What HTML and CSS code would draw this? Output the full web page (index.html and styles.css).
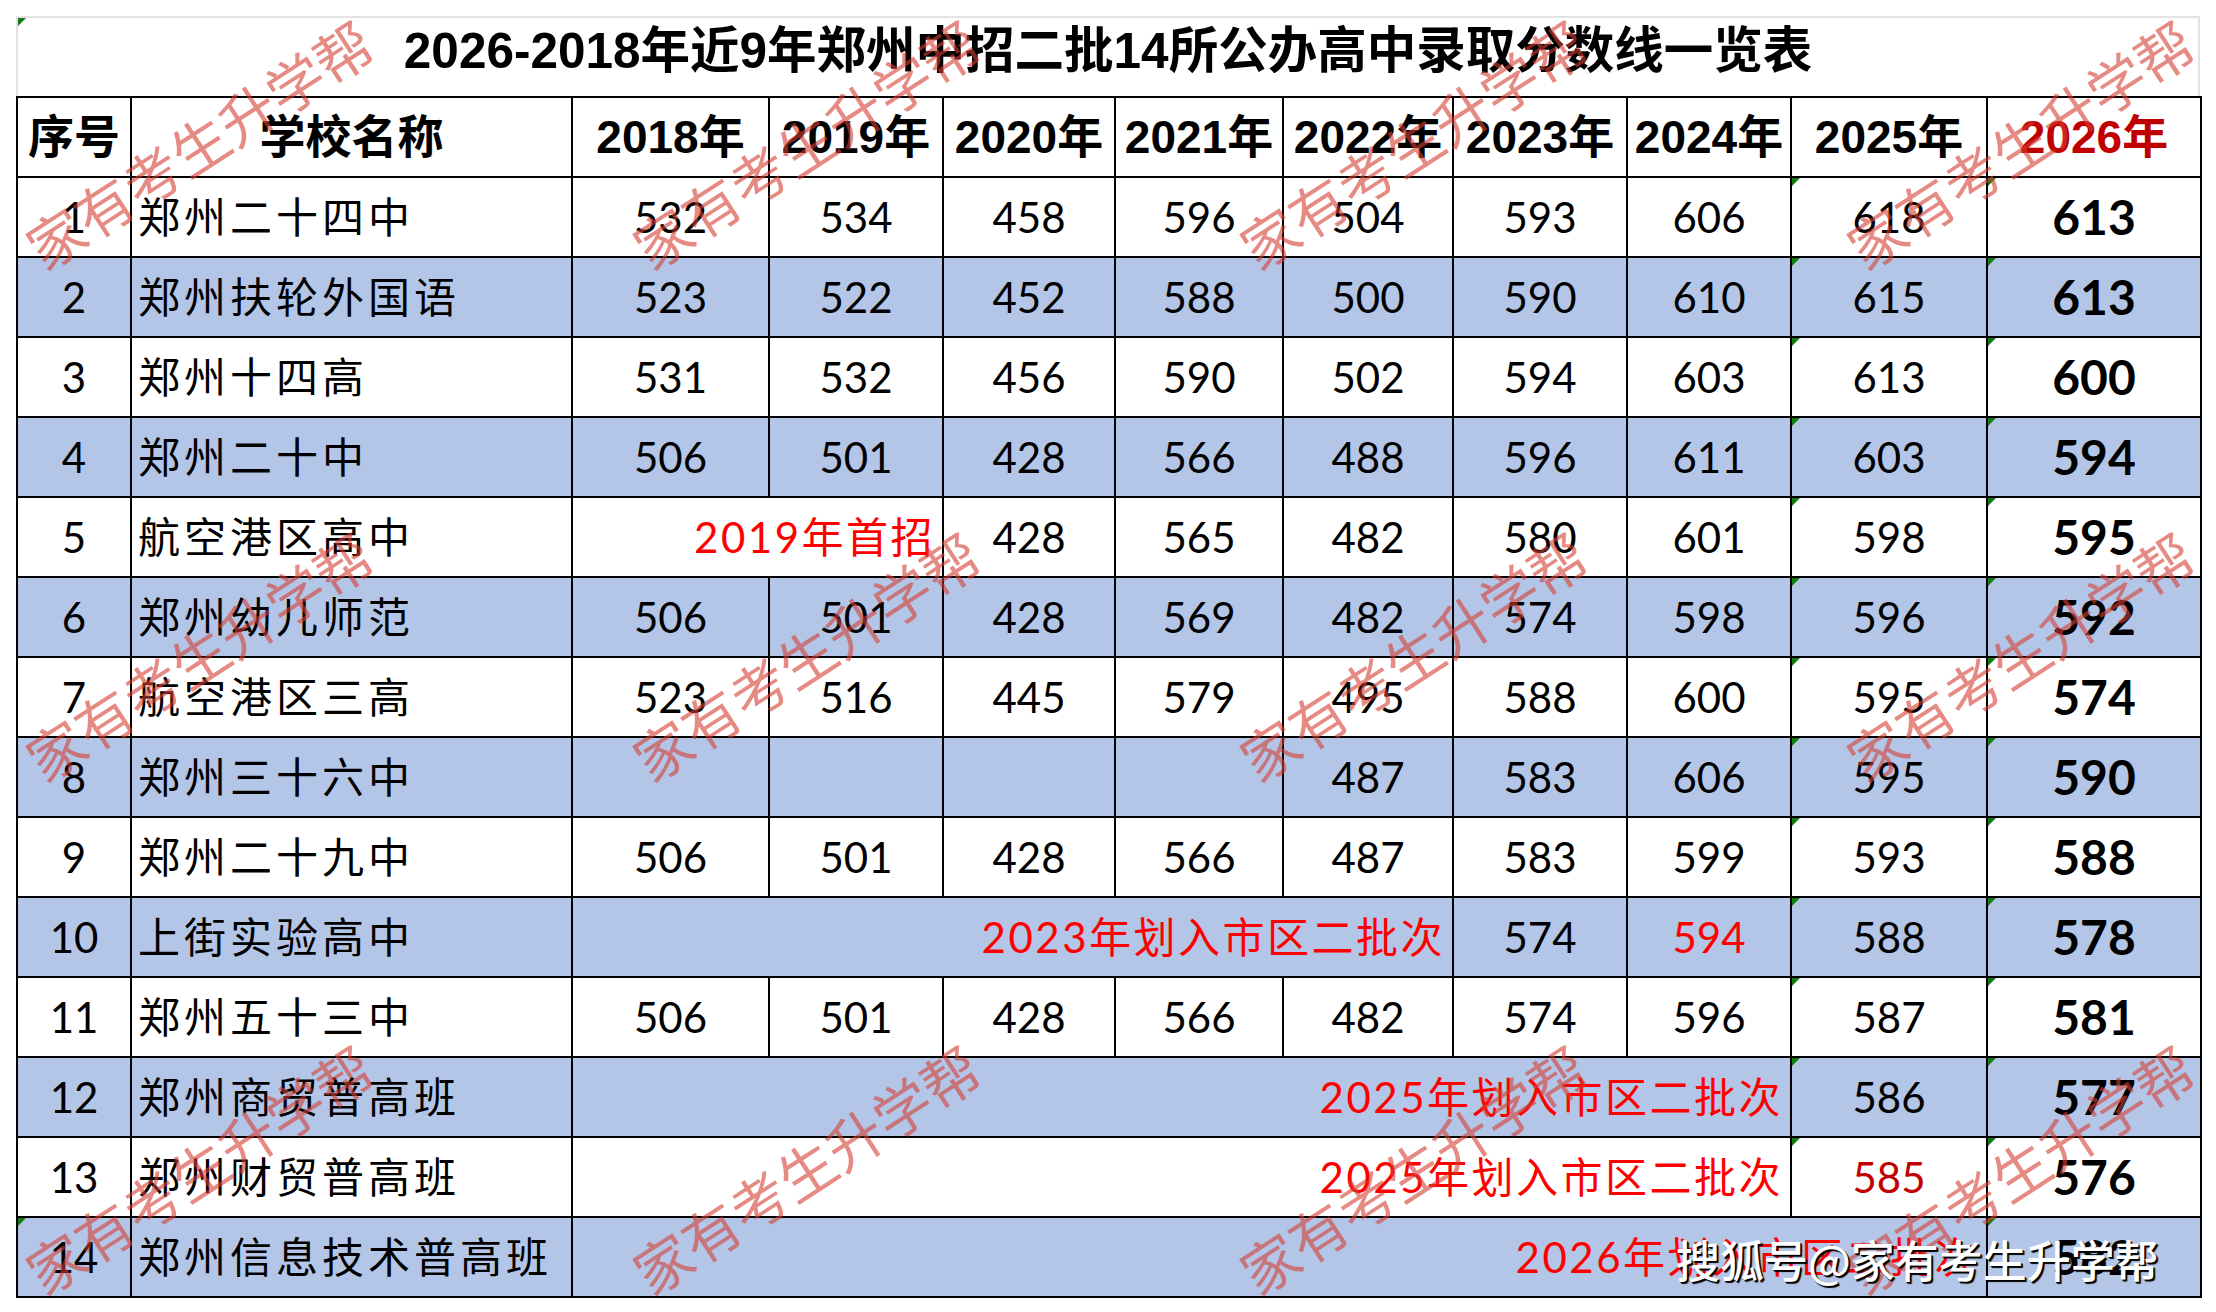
FILE: index.html
```html
<!DOCTYPE html>
<html lang="zh-CN">
<head>
<meta charset="utf-8">
<title>2026-2018年近9年郑州中招二批14所公办高中录取分数线一览表</title>
<link rel="stylesheet" href="styles.css">
</head>
<body>
<div class="page">
<div class="sheet">
  <div class="title">2026-2018年近9年郑州中招二批14所公办高中录取分数线一览表</div>
  <table class="grid">
    <colgroup>
      <col class="c-no"><col class="c-name"><col class="c-18"><col class="c-19"><col class="c-20"><col class="c-21"><col class="c-22"><col class="c-23"><col class="c-24"><col class="c-25"><col class="c-26">
    </colgroup>
    <tr class="head">
      <th>序号</th><th>学校名称</th><th>2018年</th><th>2019年</th><th>2020年</th><th>2021年</th><th>2022年</th><th>2023年</th><th>2024年</th><th>2025年</th><th class="dark">2026年</th>
    </tr>
    <tr>
      <td>1</td><td class="name">郑州二十四中</td><td>532</td><td>534</td><td>458</td><td>596</td><td>504</td><td>593</td><td>606</td><td class="mark">618</td><td class="mark final">613</td>
    </tr>
    <tr class="alt">
      <td>2</td><td class="name">郑州扶轮外国语</td><td>523</td><td>522</td><td>452</td><td>588</td><td>500</td><td>590</td><td>610</td><td class="mark">615</td><td class="mark final">613</td>
    </tr>
    <tr>
      <td>3</td><td class="name">郑州十四高</td><td>531</td><td>532</td><td>456</td><td>590</td><td>502</td><td>594</td><td>603</td><td class="mark">613</td><td class="mark final">600</td>
    </tr>
    <tr class="alt">
      <td>4</td><td class="name">郑州二十中</td><td>506</td><td>501</td><td>428</td><td>566</td><td>488</td><td>596</td><td>611</td><td class="mark">603</td><td class="mark final">594</td>
    </tr>
    <tr>
      <td>5</td><td class="name">航空港区高中</td><td class="note" colspan="2">2019年首招</td><td>428</td><td>565</td><td>482</td><td>580</td><td>601</td><td class="mark">598</td><td class="mark final">595</td>
    </tr>
    <tr class="alt">
      <td>6</td><td class="name">郑州幼儿师范</td><td>506</td><td>501</td><td>428</td><td>569</td><td>482</td><td>574</td><td>598</td><td class="mark">596</td><td class="mark final">592</td>
    </tr>
    <tr>
      <td>7</td><td class="name">航空港区三高</td><td>523</td><td>516</td><td>445</td><td>579</td><td>495</td><td>588</td><td>600</td><td class="mark">595</td><td class="mark final">574</td>
    </tr>
    <tr class="alt">
      <td>8</td><td class="name">郑州三十六中</td><td></td><td></td><td></td><td></td><td>487</td><td>583</td><td>606</td><td class="mark">595</td><td class="mark final">590</td>
    </tr>
    <tr>
      <td>9</td><td class="name">郑州二十九中</td><td>506</td><td>501</td><td>428</td><td>566</td><td>487</td><td>583</td><td>599</td><td class="mark">593</td><td class="mark final">588</td>
    </tr>
    <tr class="alt">
      <td>10</td><td class="name">上街实验高中</td><td class="note" colspan="5">2023年划入市区二批次</td><td>574</td><td class="red">594</td><td class="mark">588</td><td class="mark final">578</td>
    </tr>
    <tr>
      <td>11</td><td class="name">郑州五十三中</td><td>506</td><td>501</td><td>428</td><td>566</td><td>482</td><td>574</td><td>596</td><td class="mark">587</td><td class="mark final">581</td>
    </tr>
    <tr class="alt">
      <td>12</td><td class="name">郑州商贸普高班</td><td class="note" colspan="7">2025年划入市区二批次</td><td class="mark">586</td><td class="mark final">577</td>
    </tr>
    <tr>
      <td>13</td><td class="name">郑州财贸普高班</td><td class="note" colspan="7">2025年划入市区二批次</td><td class="mark dark">585</td><td class="mark final">576</td>
    </tr>
    <tr class="alt">
      <td class="mark">14</td><td class="name">郑州信息技术普高班</td><td class="note" colspan="8">2026年划入市区二批次</td><td class="mark final">582</td>
    </tr>
  </table>
</div>

<div class="wm-layer" aria-hidden="true">
  <span>家有考生升学帮</span><span>家有考生升学帮</span><span>家有考生升学帮</span><span>家有考生升学帮</span>
  <span>家有考生升学帮</span><span>家有考生升学帮</span><span>家有考生升学帮</span><span>家有考生升学帮</span>
  <span>家有考生升学帮</span><span>家有考生升学帮</span><span>家有考生升学帮</span><span>家有考生升学帮</span>
</div>

<div class="sohu">搜狐号@家有考生升学帮</div>
</div>
</body>
</html>
```

FILE: styles.css
```css
* { box-sizing: border-box; }

html, body {
  margin: 0;
  padding: 0;
  background: #ffffff;
  overflow: hidden;
}

body {
  font-family: Lato, "Noto Sans CJK SC", sans-serif;
  color: #000000;
}

.page {
  position: relative;
  width: 2216px;
  height: 1312px;
  overflow: hidden;
  padding: 16px 0 0 16px;
}

.sheet {
  width: 2184px;
}

.title {
  position: relative;
  height: 80px;
  border: 2px solid #e3e3e3;
  border-bottom: 0;
  display: flex;
  align-items: center;
  justify-content: center;
  padding-bottom: 12px;
  font-family: "Liberation Sans", "Noto Sans CJK SC", sans-serif;
  font-weight: 700;
  font-size: 49.5px;
  line-height: 1;
  white-space: nowrap;
}

.title::before {
  content: "";
  position: absolute;
  left: 0;
  top: 0;
  width: 0;
  height: 0;
  border-top: 8px solid #127c12;
  border-right: 8px solid transparent;
}

.grid {
  border-collapse: collapse;
  table-layout: fixed;
  width: 2184px;
}

.c-no { width: 114px; }
.c-name { width: 441px; }
.c-18 { width: 197px; }
.c-19 { width: 174px; }
.c-20 { width: 172px; }
.c-21 { width: 168px; }
.c-22 { width: 170px; }
.c-23 { width: 174px; }
.c-24 { width: 164px; }
.c-25 { width: 196px; }
.c-26 { width: 214px; }

.grid th,
.grid td {
  position: relative;
  border: 2px solid #000000;
  height: 80px;
  padding: 0;
  text-align: center;
  vertical-align: middle;
  line-height: 1;
  white-space: nowrap;
  font-size: 42px;
  font-weight: 400;
}

.grid th {
  font-family: "Liberation Sans", "Noto Sans CJK SC", sans-serif;
  font-weight: 700;
  font-size: 46px;
}

.grid tr.alt td {
  background: #b4c6e7;
}

.grid td.name {
  text-align: left;
  padding-left: 6px;
  letter-spacing: 4px;
}

.grid td.note {
  text-align: right;
  padding-right: 7px;
  letter-spacing: 2.5px;
  color: #ff0000;
}

.grid .red { color: #ff0000; }
.grid .dark { color: #c00000; }

.grid td.final {
  font-weight: 700;
  font-size: 48px;
}

.grid td.mark::before {
  content: "";
  position: absolute;
  left: 0;
  top: 0;
  width: 0;
  height: 0;
  border-top: 8px solid #127c12;
  border-right: 8px solid transparent;
}

.wm-layer {
  position: absolute;
  left: -105px;
  top: 0;
  display: grid;
  grid-template-columns: repeat(4, 607px);
  grid-template-rows: 286px 738px 288px;
  place-items: center;
  pointer-events: none;
}

.wm-layer span {
  display: block;
  transform: rotate(-33deg);
  font-family: "Noto Sans CJK SC", sans-serif;
  font-size: 57px;
  font-weight: 400;
  line-height: 1;
  white-space: nowrap;
  color: rgba(212, 62, 50, 0.6);
}

.sohu {
  position: absolute;
  left: 1676px;
  top: 1237px;
  font-family: "Noto Sans CJK SC", sans-serif;
  font-size: 44px;
  font-weight: 500;
  line-height: 1;
  white-space: nowrap;
  color: #ffffff;
  text-shadow: 2px 2px 1px #000000, 1px 1px 0 #000000;
}
```
